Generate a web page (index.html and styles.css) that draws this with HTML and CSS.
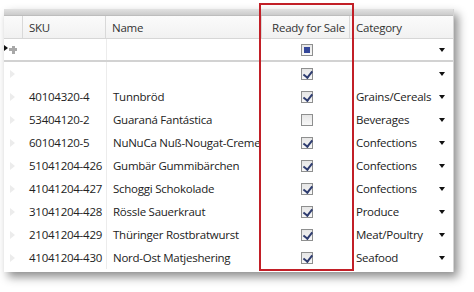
FILE: index.html
```html
<!DOCTYPE html>
<html>
<head>
<meta charset="utf-8">
<link rel="stylesheet" href="styles.css">
</head>
<body>
<div class="stage">
  <div class="grid">
    <div class="topbar"></div>
    <div class="row head">
      <div class="cell rh"></div>
      <div class="cell">SKU</div>
      <div class="cell">Name</div>
      <div class="cell center">Ready for Sale</div>
      <div class="cell">Category</div>
    </div>
    <div class="row filter">
      <div class="cell rh"><span class="star"><span class="tri"></span><span class="plus"></span></span></div>
      <div class="cell"></div>
      <div class="cell namecol"></div>
      <div class="cell center"><span class="cb ind"></span></div>
      <div class="cell cat"><span></span><span class="dd"></span></div>
    </div>
    <div class="row">
      <div class="cell rh"><span class="mk"></span></div>
      <div class="cell"></div>
      <div class="cell namecol"></div>
      <div class="cell center"><span class="cb on"></span></div>
      <div class="cell cat"><span></span><span class="dd"></span></div>
    </div>
    <div class="row">
      <div class="cell rh"><span class="mk"></span></div>
      <div class="cell">40104320-4</div>
      <div class="cell namecol">Tunnbröd</div>
      <div class="cell center"><span class="cb on"></span></div>
      <div class="cell cat"><span>Grains/Cereals</span><span class="dd"></span></div>
    </div>
    <div class="row">
      <div class="cell rh"><span class="mk"></span></div>
      <div class="cell">53404120-2</div>
      <div class="cell namecol">Guaraná Fantástica</div>
      <div class="cell center"><span class="cb"></span></div>
      <div class="cell cat"><span>Beverages</span><span class="dd"></span></div>
    </div>
    <div class="row">
      <div class="cell rh"><span class="mk"></span></div>
      <div class="cell">60104120-5</div>
      <div class="cell namecol">NuNuCa Nuß-Nougat-Creme</div>
      <div class="cell center"><span class="cb on"></span></div>
      <div class="cell cat"><span>Confections</span><span class="dd"></span></div>
    </div>
    <div class="row">
      <div class="cell rh"><span class="mk"></span></div>
      <div class="cell">51041204-426</div>
      <div class="cell namecol">Gumbär Gummibärchen</div>
      <div class="cell center"><span class="cb on"></span></div>
      <div class="cell cat"><span>Confections</span><span class="dd"></span></div>
    </div>
    <div class="row">
      <div class="cell rh"><span class="mk"></span></div>
      <div class="cell">41041204-427</div>
      <div class="cell namecol">Schoggi Schokolade</div>
      <div class="cell center"><span class="cb on"></span></div>
      <div class="cell cat"><span>Confections</span><span class="dd"></span></div>
    </div>
    <div class="row">
      <div class="cell rh"><span class="mk"></span></div>
      <div class="cell">31041204-428</div>
      <div class="cell namecol">Rössle Sauerkraut</div>
      <div class="cell center"><span class="cb on"></span></div>
      <div class="cell cat"><span>Produce</span><span class="dd"></span></div>
    </div>
    <div class="row">
      <div class="cell rh"><span class="mk"></span></div>
      <div class="cell">21041204-429</div>
      <div class="cell namecol">Thüringer Rostbratwurst</div>
      <div class="cell center"><span class="cb on"></span></div>
      <div class="cell cat"><span>Meat/Poultry</span><span class="dd"></span></div>
    </div>
    <div class="row">
      <div class="cell rh"><span class="mk"></span></div>
      <div class="cell">41041204-430</div>
      <div class="cell namecol">Nord-Ost Matjeshering</div>
      <div class="cell center"><span class="cb on"></span></div>
      <div class="cell cat"><span>Seafood</span><span class="dd"></span></div>
    </div>
  </div>
  <div class="highlight"></div>
</div>
</body>
</html>
```
FILE: styles.css
```css
* { box-sizing: border-box; }
html, body { margin: 0; padding: 0; background: #ffffff; }
body {
  font-family: "Open Sans", "Noto Sans", sans-serif;
  font-size: 11.5px;
  color: #222;
  width: 474px;
  height: 292px;
  overflow: hidden;
}
.stage {
  position: relative;
  padding: 9px 0 0 4px;
}
.grid {
  width: 450px;
  height: 263px;
  background: #fff;
  border-right: 1px solid #d4d4d4;
  box-shadow: 4px 5px 9px rgba(0,0,0,0.45);
  overflow: hidden;
}
.topbar {
  height: 7px;
  background: linear-gradient(#e2e2e2, #cbcbcb);
  border-bottom: 1px solid #bdbdbd;
}
.row {
  display: grid;
  grid-template-columns: 19px 83px 156px 88px 104px;
  height: 23px;
}
.cell {
  display: flex;
  align-items: center;
  padding-left: 6px;
  white-space: nowrap;
  overflow: hidden;
  letter-spacing: -0.25px;
}
.cell.center { justify-content: center; padding-left: 0; }
.head { height: 23px; background: linear-gradient(#fbfbfb, #f1f1f1); border-bottom: 1px solid #d6d6d6; }
.head .cell { border-right: 1px solid #d9d9d9; color: #333; }
.head .cell.center { padding-left: 6px; }
.filter { border-bottom: 2px solid #d2d2d2; }
.namecol { border-left: 1px solid #ececec; }
.rh { padding-left: 0; position: relative; }
.mk {
  width: 0; height: 0;
  margin-left: 6px;
  border-left: 5px solid #ececec;
  border-top: 4px solid transparent;
  border-bottom: 4px solid transparent;
}
.star { position: relative; width: 16px; height: 12px; }
.tri {
  position: absolute; left: 0; top: 1px;
  width: 0; height: 0;
  border-left: 4px solid #111;
  border-top: 3px solid transparent;
  border-bottom: 3px solid transparent;
}
.plus {
  position: absolute; left: 5px; top: 2px;
  width: 8px; height: 8px;
  background:
    linear-gradient(#a8a8a8, #a8a8a8) center / 8px 3px no-repeat,
    linear-gradient(#a8a8a8, #a8a8a8) center / 3px 8px no-repeat;
}
.cb {
  width: 12px; height: 12px;
  border: 1px solid #8e8f8f;
  background: linear-gradient(#e6e6e6, #f8f8f8);
  position: relative;
  margin-left: 1px;
}
.cb.ind::after {
  content: "";
  position: absolute; left: 2px; top: 2px;
  width: 6px; height: 6px;
  background: #34479a;
}
.cb.on::after {
  content: "";
  position: absolute; left: 3px; top: 0px;
  width: 3.5px; height: 7px;
  border-right: 2px solid #2f3d70;
  border-bottom: 2px solid #2f3d70;
  transform: rotate(38deg);
}
.cat { justify-content: space-between; padding-right: 9px; }
.dd {
  width: 0; height: 0;
  border-top: 4px solid #111;
  border-left: 3px solid transparent;
  border-right: 3px solid transparent;
}
.highlight {
  position: absolute;
  left: 259px; top: 3px;
  width: 95px; height: 268px;
  border: 2px solid #c21f27;
}
```
